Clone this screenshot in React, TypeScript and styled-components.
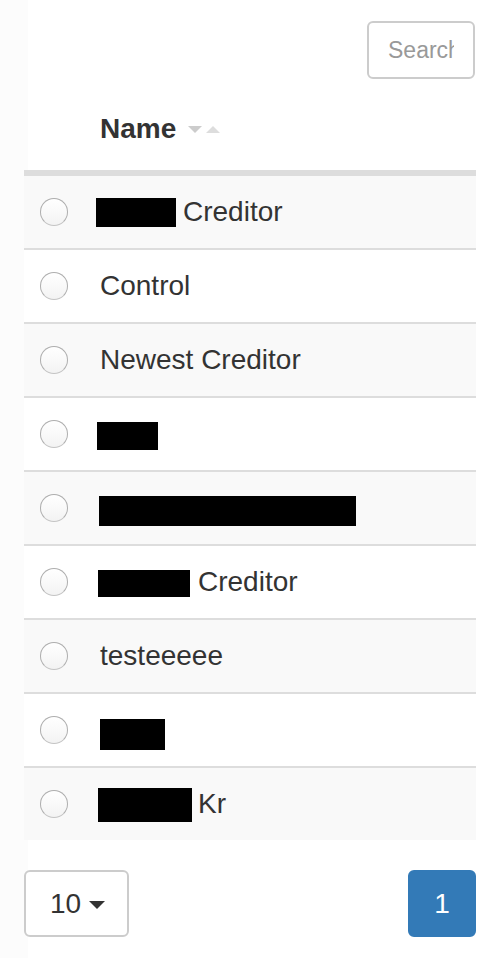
import React from "react"
import styled, { createGlobalStyle } from "styled-components"

const GlobalStyle = createGlobalStyle`
  html, body {
    margin: 0;
    padding: 0;
  }
  body {
    background: linear-gradient(to right, #fcfcfc 0, #fcfcfc 28px, #fff 28px);
    font-family: "Liberation Sans", Arial, sans-serif;
    color: #333;
  }
`

const Page = styled.div`
  width: 452px;
  padding: 0 26px 0 24px;
`

const Toolbar = styled.div`
  display: flex;
  justify-content: flex-end;
  padding-top: 21px;
  margin-right: 1px;
`

const SearchInput = styled.input`
  box-sizing: border-box;
  width: 108px;
  height: 58px;
  padding: 0 19px;
  border: 2px solid #ccc;
  border-radius: 6px;
  font-family: inherit;
  font-size: 23px;
  color: #555;
  outline: none;
  background: #fff;

  &::placeholder {
    color: #999;
  }
`

const Table = styled.table`
  width: 100%;
  border-collapse: collapse;
  border-spacing: 0;
  margin-top: 14px;
  font-size: 28px;
  line-height: 40px;
`

const HeadCell = styled.th`
  padding: 16px 16px 21px;
  text-align: left;
  font-weight: bold;
  border-bottom: 6px solid #ddd;
  white-space: nowrap;
`

const Row = styled.tr<{ $striped: boolean }>`
  background: ${({ $striped }) => ($striped ? "#f9f9f9" : "#fff")};
`

const Cell = styled.td`
  padding: 16px;
  vertical-align: middle;
  white-space: nowrap;
  border-top: 2px solid #ddd;
`

const RadioCell = styled(Cell)`
  width: 28px;
  line-height: 0;
`

const Radio = styled.span`
  display: inline-block;
  box-sizing: border-box;
  width: 28px;
  height: 28px;
  border-radius: 50%;
  border: 1.5px solid #aeaeae;
  border-bottom-color: #c4c4c4;
  background: linear-gradient(#fff, #f3f3f3);
  box-shadow: inset 0 1px 1px rgba(255, 255, 255, 0.9);
  vertical-align: middle;
`

const SortIcon = styled.svg`
  margin-left: 12px;
  vertical-align: 4px;
`

const Redact = styled.span<{ $w: number; $h: number; $drop: number; $dx: number }>`
  display: inline-block;
  width: ${({ $w }) => $w}px;
  height: ${({ $h }) => $h}px;
  margin-left: ${({ $dx }) => $dx}px;
  background: #000;
  vertical-align: ${({ $drop }) => -$drop}px;
`

const Gap = styled.span<{ $w: number }>`
  display: inline-block;
  width: ${({ $w }) => $w}px;
`

const Footer = styled.div`
  display: flex;
  justify-content: space-between;
  margin-top: 30px;
`

const PageSize = styled.button`
  box-sizing: border-box;
  display: flex;
  align-items: center;
  width: 105px;
  height: 67px;
  padding: 0 0 0 24px;
  border: 2px solid #ccc;
  border-radius: 6px;
  background: #fff;
  font-family: inherit;
  font-size: 28px;
  color: #333;
`

const Caret = styled.span`
  display: inline-block;
  margin-left: 8px;
  margin-top: 2px;
  border-top: 8px solid #333;
  border-left: 8px solid transparent;
  border-right: 8px solid transparent;
`

const PageButton = styled.button<{ $active?: boolean }>`
  box-sizing: border-box;
  width: 68px;
  height: 67px;
  border: 2px solid #337ab7;
  border-radius: 6px;
  background: ${({ $active }) => ($active ? "#337ab7" : "#fff")};
  color: ${({ $active }) => ($active ? "#fff" : "#337ab7")};
  font-family: inherit;
  font-size: 28px;
  padding: 0;
`

type Box = { w: number; h: number; drop: number; dx: number; gap?: number }
type Item = { box?: Box; text?: string }

const rows: Item[] = [
  { box: { w: 80, h: 29, drop: 6, dx: -4, gap: 7 }, text: "Creditor" },
  { text: "Control" },
  { text: "Newest Creditor" },
  { box: { w: 61, h: 28, drop: 7, dx: -3 } },
  { box: { w: 257, h: 30, drop: 9, dx: -1 } },
  { box: { w: 92, h: 27, drop: 6, dx: -2, gap: 8 }, text: "Creditor" },
  { text: "testeeeee" },
  { box: { w: 65, h: 31, drop: 11, dx: 0 } },
  { box: { w: 94, h: 34, drop: 9, dx: -2, gap: 6 }, text: "Kr" },
]

const App = () => (
  <Page>
    <GlobalStyle />
    <Toolbar>
      <SearchInput placeholder="Search" />
    </Toolbar>
    <Table>
      <thead>
        <tr>
          <HeadCell />
          <HeadCell>
            Name
            <SortIcon width="32" height="9" viewBox="0 0 32 9">
              <polygon points="0,1 14,1 7,8" fill="#ccc" />
              <polygon points="18,8 32,8 25,1" fill="#ddd" />
            </SortIcon>
          </HeadCell>
        </tr>
      </thead>
      <tbody>
        {rows.map((r, i) => (
          <Row key={i} $striped={i % 2 === 0}>
            <RadioCell>
              <Radio />
            </RadioCell>
            <Cell>
              {r.box && (
                <Redact $w={r.box.w} $h={r.box.h} $drop={r.box.drop} $dx={r.box.dx} />
              )}
              {r.box && r.text && <Gap $w={r.box.gap ?? 7} />}
              {r.text}
            </Cell>
          </Row>
        ))}
      </tbody>
    </Table>
    <Footer>
      <PageSize>
        10
        <Caret />
      </PageSize>
      <PageButton $active>1</PageButton>
    </Footer>
  </Page>
)

export default App
